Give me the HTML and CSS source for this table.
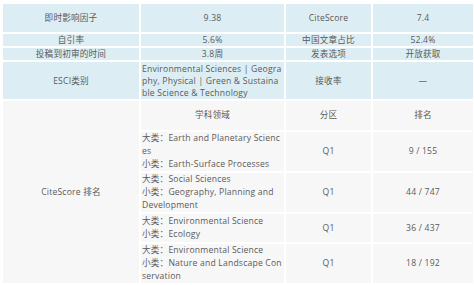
FILE: index.html
```html
<!DOCTYPE html>
<html lang="zh">
<head>
<meta charset="utf-8">
<link rel="stylesheet" href="styles.css">
</head>
<body>
<table class="info">
  <colgroup>
    <col class="c1"><col class="c2"><col class="c3"><col class="c4">
  </colgroup>
  <tr class="top r-tall">
    <td>即时影响因子</td><td>9.38</td><td>CiteScore</td><td>7.4</td>
  </tr>
  <tr class="top r-thin">
    <td>自引率</td><td>5.6%</td><td>中国文章占比</td><td>52.4%</td>
  </tr>
  <tr class="top r-thin">
    <td>投稿到初审的时间</td><td>3.8周</td><td>发表选项</td><td>开放获取</td>
  </tr>
  <tr class="top r-esci">
    <td>ESCI类别</td>
    <td class="wrap">Environmental Sciences | Geography, Physical | Green &amp; Sustainable Science &amp; Technology</td>
    <td>接收率</td><td>—</td>
  </tr>
  <tr class="low r-head">
    <td rowspan="5">CiteScore 排名</td>
    <td>学科领域</td><td>分区</td><td>排名</td>
  </tr>
  <tr class="low">
    <td class="wrap">大类：Earth and Planetary Sciences<br>小类：Earth-Surface Processes</td>
    <td>Q1</td><td>9 / 155</td>
  </tr>
  <tr class="low">
    <td class="wrap">大类：Social Sciences<br>小类：Geography, Planning and <span class="word">Development</span></td>
    <td>Q1</td><td>44 / 747</td>
  </tr>
  <tr class="low r-two">
    <td class="wrap">大类：Environmental Science<br>小类：Ecology</td>
    <td>Q1</td><td>36 / 437</td>
  </tr>
  <tr class="low">
    <td class="wrap">大类：Environmental Science<br>小类：Nature and Landscape Conservation</td>
    <td>Q1</td><td>18 / 192</td>
  </tr>
</table>
</body>
</html>
```

FILE: styles.css
```css
html, body {
  margin: 0;
  padding: 0;
  background: #ffffff;
}
body {
  padding: 2px 0 0 1px;
  font-family: "Open Sans", "Noto Sans CJK SC", sans-serif;
  font-size: 8.6px;
  letter-spacing: 0.2px;
  color: #5a5a5a;
}
.info {
  table-layout: fixed;
  border-collapse: separate;
  border-spacing: 2px;
  width: 474px;
}
.c1 { width: 136px; }
.c2 { width: 143px; }
.c3 { width: 85px; }
.c4 { width: 100px; }
.info td {
  text-align: center;
  vertical-align: middle;
  padding: 0 1px;
  line-height: 12px;
}
.top td {
  background: #dceef3;
}
.low td {
  background: #f7f7f7;
  line-height: 13px;
}
.info td.wrap {
  text-align: left;
  word-break: break-all;
}
.wrap .word {
  white-space: nowrap;
}
.r-tall td { height: 28px; }
.r-thin td { height: 12px; }
.r-esci td { height: 37px; }
.r-head td { height: 29px; }
.r-two td { height: 28px; }
```
